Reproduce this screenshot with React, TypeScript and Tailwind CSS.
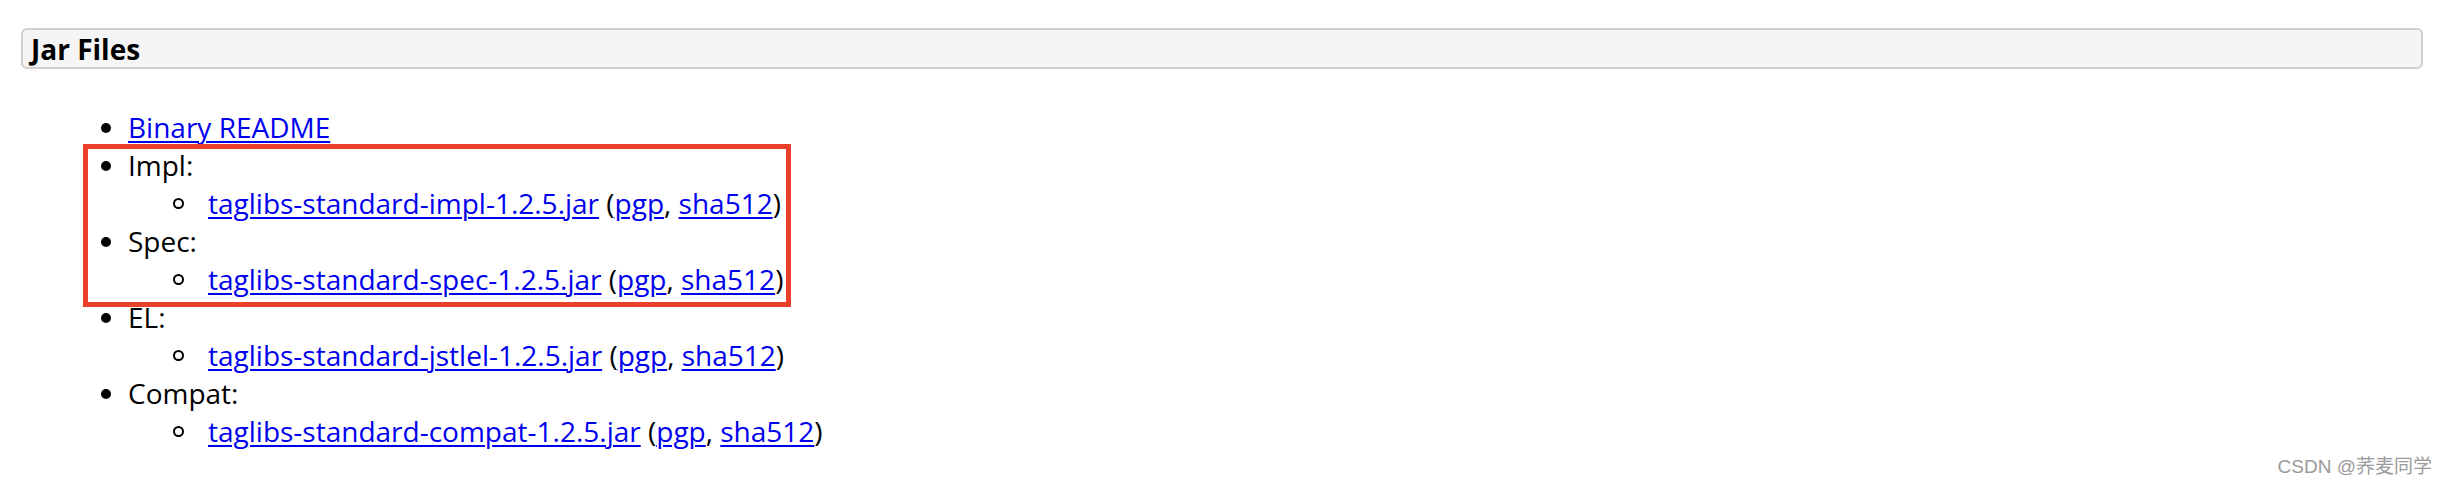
import React from 'react';

interface JarEntry {
  label: string;
  file: string;
}

const jars: JarEntry[] = [
  { label: 'Impl:', file: 'taglibs-standard-impl-1.2.5.jar' },
  { label: 'Spec:', file: 'taglibs-standard-spec-1.2.5.jar' },
  { label: 'EL:', file: 'taglibs-standard-jstlel-1.2.5.jar' },
  { label: 'Compat:', file: 'taglibs-standard-compat-1.2.5.jar' },
];

const Link: React.FC<{ children: React.ReactNode }> = ({ children }) => (
  <a href="#" className="text-[#0000ee] underline underline-offset-[3px] decoration-[2px]">
    {children}
  </a>
);

const App: React.FC = () => {
  return (
    <div
      className="relative h-[482px] w-[2446px] overflow-hidden bg-white text-black"
      style={{ fontFamily: '"Open Sans", "Noto Sans", sans-serif' }}
    >
      <div className="pt-[28px] pl-[21px] pr-[23px]">
        {/* Section header */}
        <div className="flex h-[41px] items-center rounded-[6px] border-2 border-[#cfcfcf] bg-[#f5f5f5] pl-[8px]">
          <h3 className="text-[28px] font-bold leading-none">Jar Files</h3>
        </div>

        {/* File list */}
        <ul className="mt-[39px] ml-[27px] list-disc pl-[80px] text-[28px] leading-[38px]">
          <li>
            <Link>Binary README</Link>
          </li>
          {jars.map((jar) => (
            <li key={jar.file}>
              {jar.label}
              <ul className="list-none pl-[45px]">
                <li className="flex items-center gap-[24px]">
                  <span className="h-[11px] w-[11px] shrink-0 rounded-full border-2 border-black" />
                  <span>
                    <Link>{jar.file}</Link> (<Link>pgp</Link>, <Link>sha512</Link>)
                  </span>
                </li>
              </ul>
            </li>
          ))}
        </ul>
      </div>

      {/* Highlight annotation */}
      <div className="absolute left-[83px] top-[144px] h-[163px] w-[708px] border-[5px] border-[#e9402b]" />

      {/* Watermark */}
      <div
        className="absolute right-[14px] bottom-[6px] text-[19px] leading-none text-[#9a9a9a]"
        style={{ fontFamily: '"Liberation Sans", "Noto Sans CJK SC", sans-serif' }}
      >
        CSDN @荞麦同学
      </div>
    </div>
  );
};

export default App;
